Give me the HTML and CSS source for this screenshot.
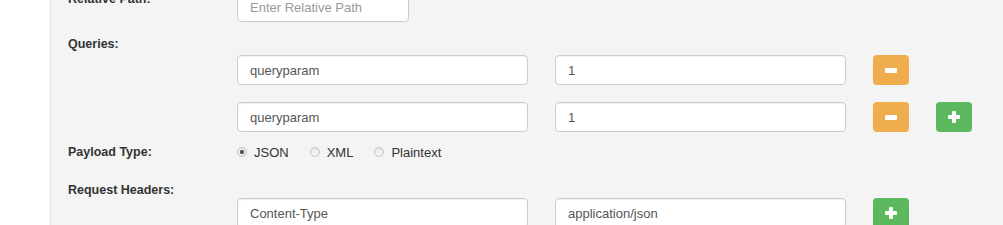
FILE: index.html
```html
<!DOCTYPE html>
<html lang="en">
<head>
    <meta charset="UTF-8">
    <title>Request Builder</title>
    <link rel="stylesheet" href="styles.css">
</head>
<body>
    <div class="panel">
        <div class="form-row top-row">
            <label class="form-label">Relative Path:</label>
            <input class="form-control short" type="text" placeholder="Enter Relative Path">
        </div>

        <div class="form-row label-only">
            <label class="form-label">Queries:</label>
        </div>
        <div class="form-row pair-row">
            <span class="form-label"></span>
            <input class="form-control" type="text" value="queryparam">
            <input class="form-control" type="text" value="1">
            <button class="btn btn-warning"><svg width="12" height="5" viewBox="0 0 12 5"><rect x="0" y="0" width="12" height="5" rx="1" fill="#fff"/></svg></button>
        </div>
        <div class="form-row pair-row">
            <span class="form-label"></span>
            <input class="form-control" type="text" value="queryparam">
            <input class="form-control" type="text" value="1">
            <button class="btn btn-warning"><svg width="12" height="5" viewBox="0 0 12 5"><rect x="0" y="0" width="12" height="5" rx="1" fill="#fff"/></svg></button>
            <button class="btn btn-success"><svg width="12" height="12" viewBox="0 0 12 12"><path d="M4 1q0-1 1-1h2q1 0 1 1v3h3q1 0 1 1v2q0 1-1 1h-3v3q0 1-1 1h-2q-1 0-1-1v-3h-3q-1 0-1-1v-2q0-1 1-1h3z" fill="#fff"/></svg></button>
        </div>

        <div class="form-row radio-row">
            <label class="form-label">Payload Type:</label>
            <label class="radio"><input type="radio" name="payload" checked> JSON</label>
            <label class="radio"><input type="radio" name="payload"> XML</label>
            <label class="radio"><input type="radio" name="payload"> Plaintext</label>
        </div>

        <div class="form-row label-only headers-label">
            <label class="form-label">Request Headers:</label>
        </div>
        <div class="form-row pair-row">
            <span class="form-label"></span>
            <input class="form-control" type="text" value="Content-Type">
            <input class="form-control" type="text" value="application/json">
            <button class="btn btn-success"><svg width="12" height="12" viewBox="0 0 12 12"><path d="M4 1q0-1 1-1h2q1 0 1 1v3h3q1 0 1 1v2q0 1-1 1h-3v3q0 1-1 1h-2q-1 0-1-1v-3h-3q-1 0-1-1v-2q0-1 1-1h3z" fill="#fff"/></svg></button>
        </div>
    </div>
</body>
</html>
```

FILE: styles.css
```css
body {
    margin: 0;
    background-color: #fff;
    font-family: "Liberation Sans", Arial, sans-serif;
    color: #333;
    overflow: hidden;
    height: 225px;
}

.panel {
    margin-left: 50px;
    height: 100%;
    background-color: #f4f4f4;
    border-left: 1px solid #e6e6e6;
    padding-left: 17px;
    display: flex;
    flex-direction: column;
}

.form-row {
    display: flex;
    align-items: center;
    gap: 27px;
}

.form-label {
    width: 142px;
    flex: none;
    font-size: 12.5px;
    font-weight: bold;
    line-height: 14px;
}

.top-row {
    margin-top: -8px;
    align-items: flex-start;
}

.label-only {
    margin-top: 15px;
}

.pair-row {
    margin-top: 4px;
}

.pair-row + .pair-row {
    margin-top: 17px;
}

.form-control {
    box-sizing: border-box;
    width: 291px;
    height: 30px;
    padding: 0 12px;
    border: 1px solid #ccc;
    border-radius: 4px;
    background-color: #fff;
    font-family: inherit;
    font-size: 13px;
    color: #555;
    box-shadow: inset 0 1px 1px rgba(0, 0, 0, 0.06);
}

.form-control.short {
    width: 172px;
}

.form-control::placeholder {
    color: #999;
}

.btn {
    width: 36px;
    height: 30px;
    border: none;
    border-radius: 4px;
    padding: 0;
    display: flex;
    align-items: center;
    justify-content: center;
}

.btn-warning {
    background-color: #f0ad4e;
}

.btn-success {
    background-color: #5cb85c;
}

.radio-row {
    margin-top: 13px;
    gap: 0;
    height: 14px;
}

.radio-row .form-label {
    margin-right: 27px;
}

.radio {
    display: flex;
    align-items: center;
    font-size: 13px;
    color: #333;
    margin-right: 21px;
}

.radio input {
    appearance: none;
    box-sizing: border-box;
    width: 10px;
    height: 10px;
    margin: 0 7px 0 0;
    border: 1px solid #c3c3c3;
    border-radius: 50%;
    background: linear-gradient(#e6e6e6, #f7f7f7);
}

.radio input:checked {
    background: radial-gradient(circle, #555 0, #555 1.8px, #e8e8e8 2.4px);
}

.headers-label {
    margin-top: 24px;
}

.headers-label + .pair-row {
    margin-top: 1px;
}
```
